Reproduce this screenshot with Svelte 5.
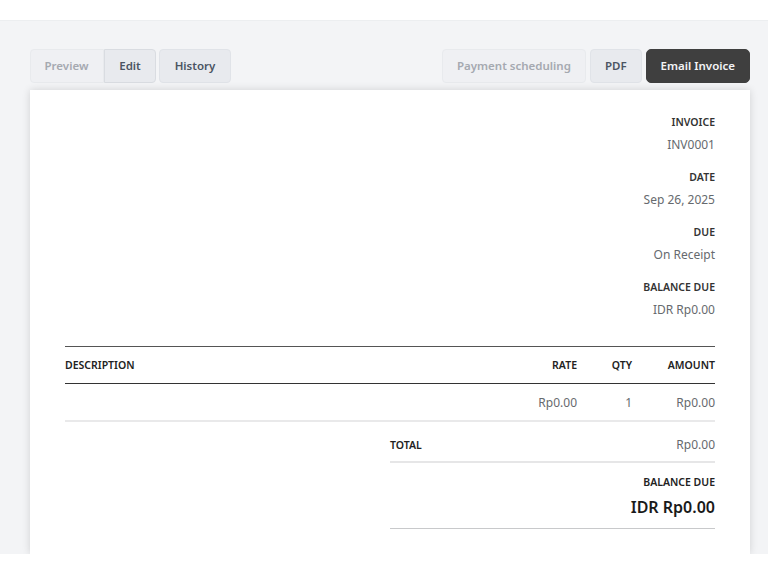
<script>
  const meta = [
    { label: "INVOICE", value: "INV0001" },
    { label: "DATE", value: "Sep 26, 2025" },
    { label: "DUE", value: "On Receipt" },
    { label: "BALANCE DUE", value: "IDR Rp0.00" },
  ];
</script>

<div class="page">
  <div class="topbar"></div>

  <main class="main">
    <div class="toolbar">
      <div class="left">
        <div class="segment">
          <button class="btn seg-first" disabled>Preview</button>
          <button class="btn seg-last">Edit</button>
        </div>
        <button class="btn history">History</button>
      </div>
      <div class="right">
        <button class="btn" disabled>Payment scheduling</button>
        <button class="btn">PDF</button>
        <button class="btn primary">Email Invoice</button>
      </div>
    </div>

    <section class="invoice">
      <div class="meta">
        {#each meta as item}
          <div class="meta-item">
            <div class="label">{item.label}</div>
            <div class="value">{item.value}</div>
          </div>
        {/each}
      </div>

      <div class="items">
        <div class="row head">
          <span class="desc">DESCRIPTION</span>
          <span class="rate">RATE</span>
          <span class="qty">QTY</span>
          <span class="amount">AMOUNT</span>
        </div>
        <div class="row line">
          <span class="desc"></span>
          <span class="rate">Rp0.00</span>
          <span class="qty">1</span>
          <span class="amount">Rp0.00</span>
        </div>
      </div>

      <div class="totals">
        <div class="total-row">
          <span class="label">TOTAL</span>
          <span class="value">Rp0.00</span>
        </div>
        <div class="balance">
          <div class="label">BALANCE DUE</div>
          <div class="balance-value">IDR Rp0.00</div>
        </div>
      </div>
    </section>
  </main>
</div>

<style>
  :global(body) {
    background: #fff;
    font-family: "Noto Sans", "Open Sans", sans-serif;
  }

  .page {
    height: 576px;
    overflow: hidden;
    background: #fff;
  }

  .topbar {
    height: 21px;
    border-bottom: 1px solid #eceef0;
    box-sizing: border-box;
  }

  .main {
    height: 533px;
    box-sizing: border-box;
    background: #f3f4f6;
    padding: 28px 18px 0 30px;
    display: flex;
    flex-direction: column;
    gap: 7px;
  }

  .toolbar {
    display: flex;
    justify-content: space-between;
    height: 34px;
  }

  .left {
    display: flex;
    gap: 3px;
  }

  .right {
    display: flex;
    gap: 4px;
  }

  .segment {
    display: flex;
  }

  .btn {
    height: 34px;
    padding: 0 14px 2px;
    border: 1px solid #e0e3e8;
    border-radius: 4px;
    background: #e8eaee;
    color: #4b5563;
    font-family: inherit;
    font-size: 11.5px;
    font-weight: 600;
  }

  .btn:disabled {
    background: #eff0f3;
    border-color: #e8eaed;
    color: #a5a9b0;
  }

  .seg-first {
    border-radius: 4px 0 0 4px;
    width: 74px;
    padding: 0 1px 2px 0;
  }

  .seg-last {
    border-radius: 0 4px 4px 0;
    width: 52px;
    padding: 0 0 2px;
    border-color: #d9dce1;
  }

  .history {
    width: 72px;
    padding: 0 0 2px;
  }

  .primary {
    background: #3f3f3f;
    border-color: #3f3f3f;
    color: #f3f4f6;
    border-radius: 5px;
  }

  .invoice {
    flex: 1;
    background: #fff;
    padding: 22px 35px 0;
    box-shadow: 0 0 8px rgba(0, 0, 0, 0.14);
    clip-path: inset(-10px -10px 0 -10px);
  }

  .meta {
    display: flex;
    flex-direction: column;
    align-items: flex-end;
    gap: 10px;
    margin-bottom: 24px;
  }

  .meta-item {
    text-align: right;
  }

  .label {
    font-size: 10.5px;
    font-weight: 600;
    line-height: 20px;
    color: #333;
  }

  .value {
    font-size: 12px;
    line-height: 24px;
    padding-top: 1px;
    color: #666a6e;
  }

  .items {
    font-size: 12px;
  }

  .row {
    display: flex;
    align-items: center;
    box-sizing: border-box;
  }

  .head {
    height: 38px;
    border-top: 1px solid #555;
    border-bottom: 1px solid #333;
    font-size: 10.5px;
    font-weight: 600;
    color: #222;
  }

  .line {
    height: 38px;
    border-bottom: 2px solid #e9e9ea;
    color: #666a6e;
  }

  .desc {
    flex: 1;
  }

  .rate {
    text-align: right;
  }

  .qty {
    width: 55px;
    text-align: right;
  }

  .amount {
    width: 83px;
    text-align: right;
  }

  .totals {
    margin-left: 325px;
  }

  .total-row {
    height: 41px;
    box-sizing: border-box;
    padding-top: 7px;
    display: flex;
    justify-content: space-between;
    align-items: center;
    border-bottom: 2px solid #e6e6e7;
  }

  .total-row .label {
    color: #222;
  }

  .total-row .value {
    padding-top: 0;
  }

  .balance {
    height: 66px;
    box-sizing: border-box;
    padding-top: 9px;
    text-align: right;
    border-bottom: 1px solid #c8c9cb;
  }

  .balance .label {
    color: #222;
  }

  .balance-value {
    font-size: 16px;
    font-weight: 600;
    line-height: 30px;
    color: #1a1a1a;
  }
</style>
